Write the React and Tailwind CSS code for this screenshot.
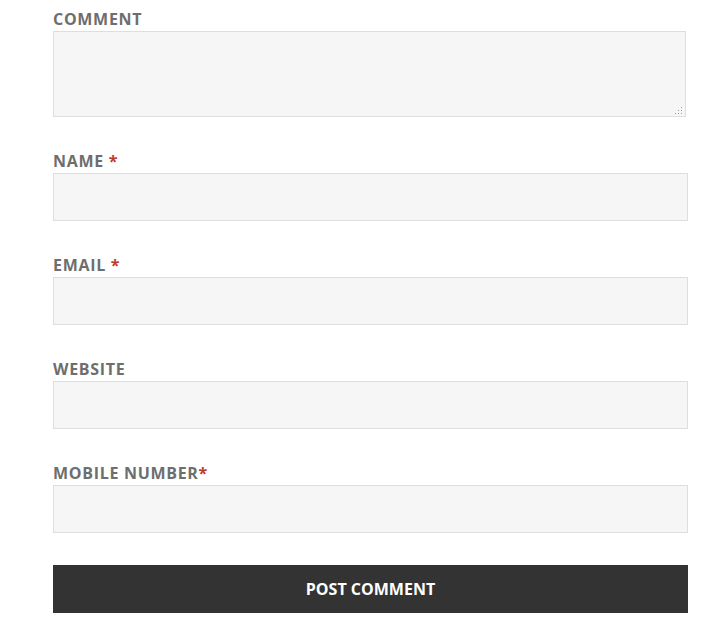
export default function App() {
    const fields = [
        { label: "NAME", req: " *" },
        { label: "EMAIL", req: " *" },
        { label: "WEBSITE" },
        { label: "MOBILE NUMBER", req: "*" },
    ];

    return (
        <div className="min-h-screen bg-white pt-[8px] pl-[53px] font-['Open_Sans',sans-serif]">
            <form className="w-[635px]" onSubmit={(e) => e.preventDefault()}>
                <div className="mb-[33px]">
                    <label className="block mb-[1px] text-[16px] leading-[22px] font-bold tracking-[0.7px] text-[#6e6e6e]">
                        COMMENT
                    </label>
                    <div className="relative w-[633px]">
                        <textarea className="block w-[633px] h-[86px] resize-none bg-[#f6f6f6] border border-[#dedede] outline-none" />
                        <div className="absolute right-[4px] bottom-[3px] grid grid-cols-3 gap-[2px]">
                            <span className="w-px h-px" />
                            <span className="w-px h-px" />
                            <span className="w-px h-px bg-[#9a9a9a]" />
                            <span className="w-px h-px" />
                            <span className="w-px h-px bg-[#9a9a9a]" />
                            <span className="w-px h-px bg-[#9a9a9a]" />
                            <span className="w-px h-px bg-[#9a9a9a]" />
                            <span className="w-px h-px bg-[#9a9a9a]" />
                            <span className="w-px h-px bg-[#9a9a9a]" />
                        </div>
                    </div>
                </div>

                {fields.map((f) => (
                    <div key={f.label} className="mb-[33px] last-of-type:mb-[32px]">
                        <label className="block mb-[1px] text-[16px] leading-[22px] font-bold tracking-[0.7px] text-[#6e6e6e]">
                            {f.label}
                            {f.req && <span className="text-[#c0392b]">{f.req}</span>}
                        </label>
                        <input className="block w-full h-[48px] bg-[#f6f6f6] border border-[#dedede] outline-none" />
                    </div>
                ))}

                <button className="block w-full h-[48px] bg-[#333333] text-white text-[16px] font-bold">
                    POST COMMENT
                </button>
            </form>
        </div>
    );
}
